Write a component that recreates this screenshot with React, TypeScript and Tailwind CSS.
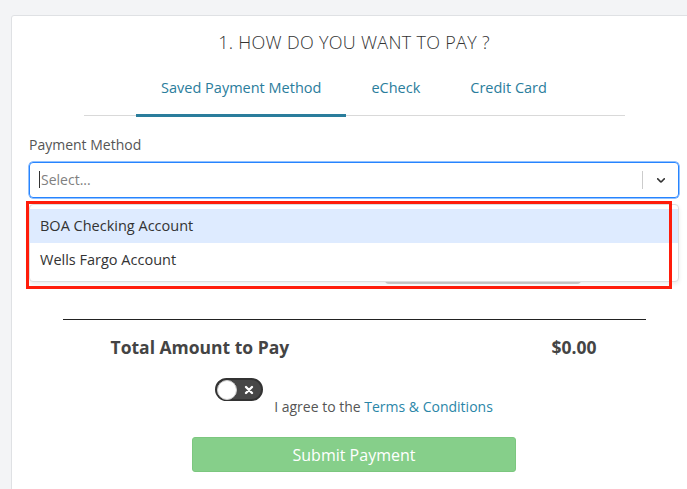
import { useState } from 'react';

const font = { fontFamily: '"Open Sans", "Noto Sans", sans-serif' };

const tabs = ['Saved Payment Method', 'eCheck', 'Credit Card'];
const options = ['BOA Checking Account', 'Wells Fargo Account'];

export default function App() {
  const [activeTab] = useState(0);
  const [hovered] = useState(0);

  return (
    <div className="h-[489px] w-full overflow-hidden bg-[#f3f4f6] pl-[11px] pt-[15px]" style={font}>
      <div className="w-[686px] rounded-tl-[3px] border border-[#dfe1e4] bg-white px-[17px] pb-6">
        {/* Heading */}
        <h1 className="pt-[13px] text-center text-[18px] font-light tracking-[0.3px] text-[#333]">
          1. HOW DO YOU WANT TO PAY ?
        </h1>

        {/* Tabs */}
        <div className="mx-auto mt-[21px] flex w-[541px] justify-center border-b border-[#d9d9d9]">
          {tabs.map((tab, i) => (
            <button
              key={tab}
              className={`-mb-[2px] px-[25px] pb-[15px] text-[14.5px] text-[#2a7d9c] ${
                activeTab === i ? 'border-b-[3px] border-[#2a7d9c] font-medium' : 'border-b-[3px] border-transparent'
              }`}
            >
              {tab}
            </button>
          ))}
        </div>

        {/* Payment method select */}
        <p className="mt-[18px] text-[14px] text-[#555]">Payment Method</p>
        <div className="relative mt-[7px]">
          <div className="flex h-[36px] items-center rounded-[4px] border border-[#2684ff] shadow-[0_0_0_0.5px_#2684ff]">
            <div className="flex flex-1 items-center pl-[9px] text-[14px] text-[#808080]">
              <span className="mr-[1px] h-[17px] w-px bg-[#333]" />
              Select...
            </div>
            <span className="h-[18px] w-px bg-[#ccc]" />
            <div className="flex w-[35px] items-center justify-center">
              <svg width="14" height="14" viewBox="0 0 20 20" fill="#333">
                <path d="M4.516 7.548c0.436-0.446 1.043-0.481 1.576 0l3.908 3.747 3.908-3.747c0.533-0.481 1.141-0.446 1.574 0 0.436 0.445 0.408 1.197 0 1.615-0.406 0.418-4.695 4.502-4.695 4.502-0.217 0.223-0.502 0.335-0.787 0.335s-0.57-0.112-0.789-0.335c0 0-4.287-4.084-4.695-4.502s-0.436-1.17 0-1.615z" />
              </svg>
            </div>
          </div>

          {/* Open menu */}
          <div className="absolute left-0 right-0 top-[42px] z-10 rounded-[4px] border border-[#ddd] bg-white py-[4px] shadow-[0_2px_4px_rgba(0,0,0,0.08)]">
            {options.map((opt, i) => (
              <div
                key={opt}
                className={`flex h-[34px] items-center px-[10px] text-[14.5px] text-[#333] ${
                  hovered === i ? 'bg-[#deebff]' : ''
                }`}
              >
                {opt}
              </div>
            ))}
          </div>
          {/* Highlight box */}
          <div className="pointer-events-none absolute left-[-3px] top-[39px] z-20 h-[88px] w-[646px] border-[3px] border-[#ff1c0a]" />

          {/* Hidden content behind the menu */}
          <div className="flex h-[86px] items-end pl-[356px]">
            <div className="h-[14px] w-[196px] rounded-b-[4px] border-b-2 border-[#cfcfcf] bg-[#f4f4f4]" />
          </div>
        </div>

        {/* Total */}
        <div className="mx-auto mt-[35px] w-[583px] border-t border-[#222] pl-[48px] pr-[49px]">
          <div className="mt-[14px] flex items-center justify-between text-[17.5px] font-bold text-[#444]">
            <span>Total Amount to Pay</span>
            <span>$0.00</span>
          </div>
        </div>

        {/* Terms toggle */}
        <div className="mt-[18px] flex items-start justify-center gap-[11px]">
          <div className="flex h-[23px] w-[48px] items-center rounded-full border-2 border-[#333] bg-[#474747]">
            <span className="h-[20px] w-[20px] rounded-full border border-[#ccc] bg-white" />
            <svg className="ml-[7px]" width="10" height="10" viewBox="0 0 10 10" stroke="white" strokeWidth="2.4" strokeLinecap="round">
              <path d="M2 2l6 6M8 2l-6 6" />
            </svg>
          </div>
          <p className="mt-[18px] text-[14px] text-[#555]">
            I agree to the <span className="text-[#2a86a8]">Terms &amp; Conditions</span>
          </p>
        </div>

        <div className="mt-[20px] flex justify-center">
          <button className="h-[35px] w-[324px] rounded-[3px] border border-[#7cc77f] bg-[#86cf8a] text-[16px] text-white">
            Submit Payment
          </button>
        </div>
      </div>
    </div>
  );
}
